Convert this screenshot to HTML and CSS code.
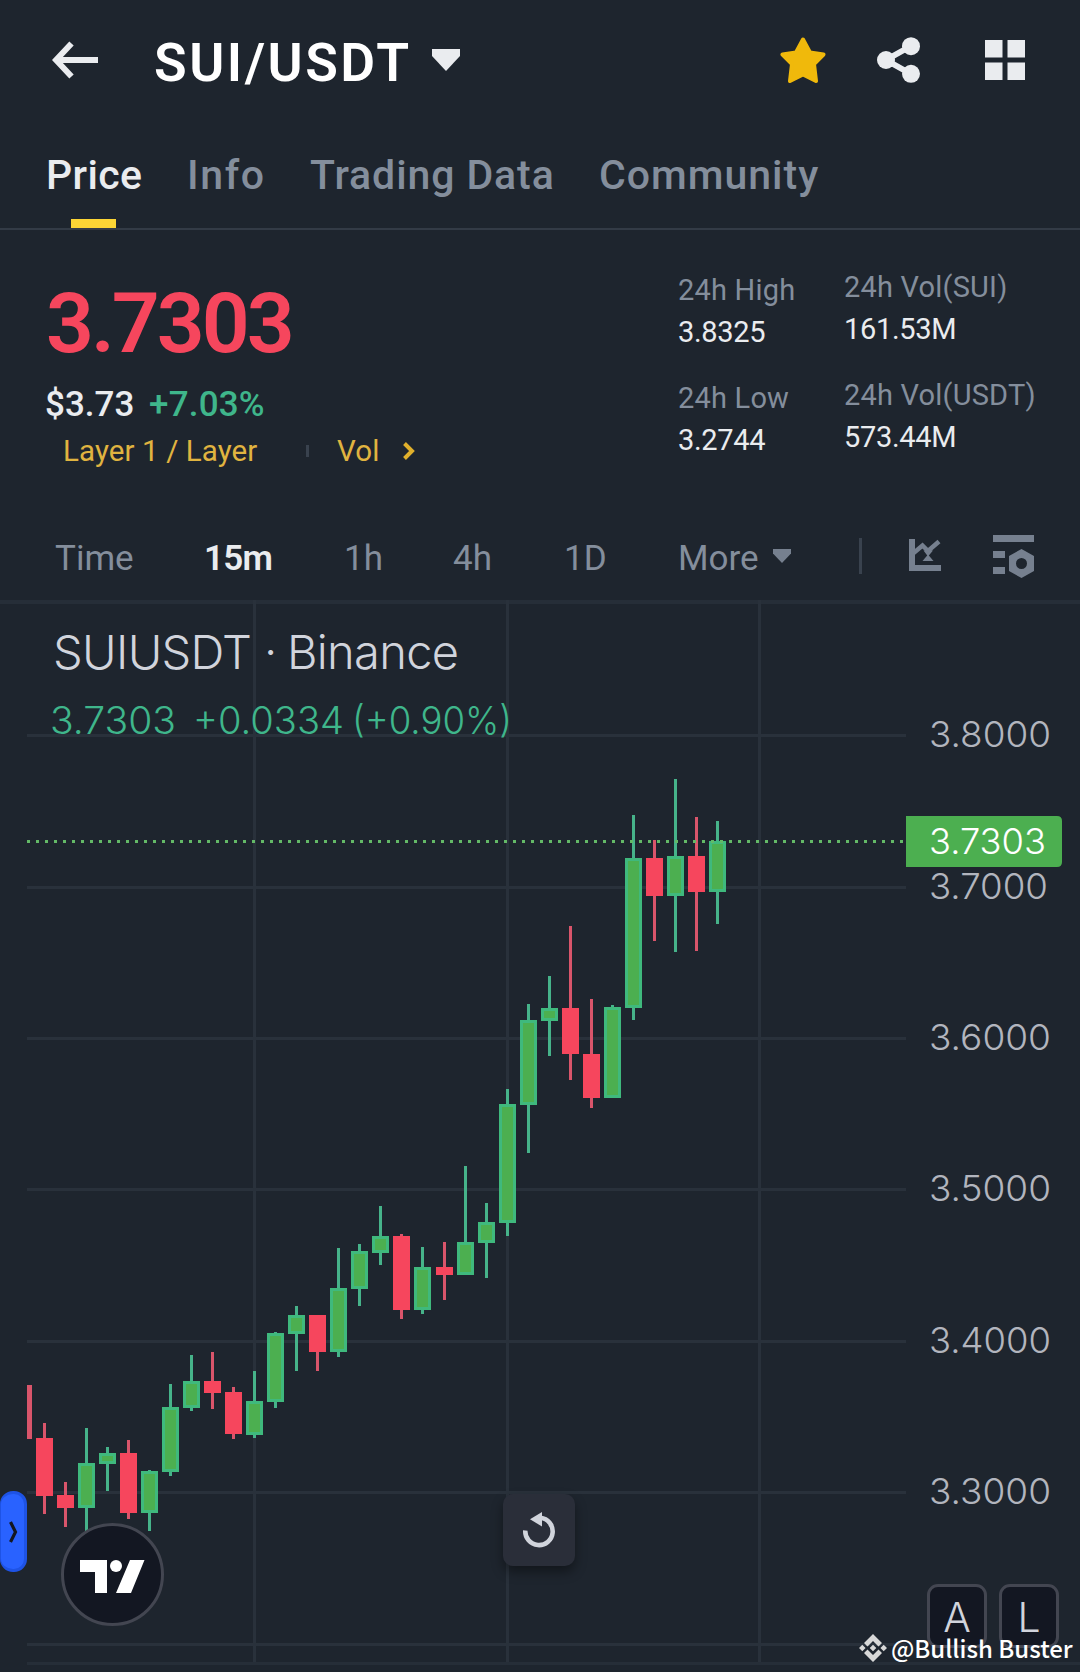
FILE: index.html
```html
<!DOCTYPE html>
<html lang="en">
<head>
  <meta charset="UTF-8">
  <title>SUI/USDT</title>
  <link rel="stylesheet" href="styles.css">
</head>
<body>
  <header class="topbar">
    <svg class="back" width="46" height="38" viewBox="0 0 46 38">
      <path d="M46 19H4M19.500 2.500L4 19L19.500 35.500" fill="none" stroke="#eaecef" stroke-width="6"/>
    </svg>
    <h1 class="pair">SUI/USDT</h1>
    <svg class="pair-caret" width="28" height="22" viewBox="0 0 28 22">
      <path d="M0 0H28V7L14 22L0 7Z" fill="#eaecef"/>
    </svg>
    <svg class="star" width="46" height="47" viewBox="0 0 46 47">
      <path d="M23 2.500L30 15.500L43.500 17.500L34 27L36 44L23 37.500L10 44L12 27L2.500 17.500L16 15.500Z" fill="#f0b90b" stroke="#f0b90b" stroke-width="4" stroke-linejoin="round"/>
    </svg>
    <svg class="share" width="43" height="46" viewBox="0 0 43 46">
      <path d="M34 9L9 23L34 37" fill="none" stroke="#eaecef" stroke-width="6"/>
      <circle cx="34" cy="9.200" r="9" fill="#eaecef"/>
      <circle cx="9" cy="23" r="9" fill="#eaecef"/>
      <circle cx="34" cy="36.800" r="9" fill="#eaecef"/>
    </svg>
    <svg class="grid-icon" width="40" height="40" viewBox="0 0 40 40">
      <path d="M0 0H17.500V17.500H0ZM22.500 0H40V17.500H22.500ZM0 22.500H17.500V40H0ZM22.500 22.500H40V40H22.500Z" fill="#eaecef"/>
    </svg>
  </header>

  <nav class="tabs">
    <a class="tab active">Price</a>
    <a class="tab info">Info</a>
    <a class="tab trading">Trading Data</a>
    <a class="tab community">Community</a>
  </nav>

  <section class="summary">
    <div class="quote">
      <div class="last-price">3.7303</div>
      <div class="change"><span class="usd">$3.73</span><span class="percent">+7.03%</span></div>
      <div class="tags">
        <span class="tag-layer">Layer 1 / Layer</span>
        <span class="tag-line"></span>
        <span class="tag-vol">Vol</span>
        <svg width="12" height="18" viewBox="0 0 12 18">
          <path d="M1.500 1.500L9 9L1.500 16.500" fill="none" stroke="#e0b02c" stroke-width="4"/>
        </svg>
      </div>
    </div>
    <div class="stats">
      <div class="stat"><span class="label">24h High</span><span class="value">3.8325</span></div>
      <div class="stat"><span class="label">24h Low</span><span class="value">3.2744</span></div>
    </div>
    <div class="stats stats-vol">
      <div class="stat"><span class="label">24h Vol(SUI)</span><span class="value">161.53M</span></div>
      <div class="stat"><span class="label">24h Vol(USDT)</span><span class="value">573.44M</span></div>
    </div>
  </section>

  <nav class="intervals">
    <span>Time</span>
    <span class="selected">15m</span>
    <span>1h</span>
    <span>4h</span>
    <span>1D</span>
    <span>More</span>
    <svg class="more-caret" width="18" height="14" viewBox="0 0 18 14">
      <path d="M0 0H18V4.500L9 14L0 4.500Z" fill="#76808f"/>
    </svg>
    <i class="divider"></i>
    <svg class="draw" width="33" height="33" viewBox="0 0 33 33">
      <path d="M0 0H6V26H32V32H0Z" fill="#76808f"/>
      <path d="M4 14.500L13.500 6.500L19 12L30 2.500" fill="none" stroke="#76808f" stroke-width="4.500"/>
      <path d="M19 15.500L13.500 22H24.500Z" fill="#76808f"/>
      <path d="M14.500 11.500L19 17.500L24 11.500Z" fill="#76808f"/>
    </svg>
    <svg class="settings" width="41" height="43" viewBox="0 0 41 43">
      <path d="M0 0H41V7H0ZM0 16H12V23H0ZM0 32H12V39H0Z" fill="#76808f"/>
      <path d="M28.500 14L41 21V36L28.500 43L16 36V21ZM28.500 23A5.500 5.500 0 1 0 28.500 34A5.500 5.500 0 1 0 28.500 23Z" fill="#76808f" fill-rule="evenodd"/>
    </svg>
  </nav>

  <main class="chart">
    <svg class="plot" width="1080" height="1072" viewBox="0 600 1080 1072">
      <rect class="border" x="0" y="600" width="1080" height="4"/>
      <g id="grid"></g>
      <rect class="border" x="27" y="1662" width="1053" height="3"/>
      <g id="candles"></g>
      <line class="last-line" x1="27" y1="841.500" x2="904" y2="841.500"/>
      <g class="legend">
        <text class="symbol" x="53" y="669" textLength="199">SUIUSDT</text>
        <text class="symbol" x="264" y="669">·</text>
        <text class="symbol" x="287" y="669" textLength="172">Binance</text>
        <text class="delta" x="50" y="733.500" textLength="126" lengthAdjust="spacingAndGlyphs">3.7303</text>
        <text class="delta" x="193" y="733.500" textLength="151" lengthAdjust="spacingAndGlyphs">+0.0334</text>
        <text class="delta" x="352" y="733.500" textLength="160" lengthAdjust="spacingAndGlyphs">(+0.90%)</text>
      </g>
      <g id="axis"></g>
      <path d="M906 816H1057Q1062 816 1062 821V862Q1062 867 1057 867H906Z" fill="#4caf50"/>
      <text class="price-tag" x="929" y="854" textLength="117" lengthAdjust="spacingAndGlyphs">3.7303</text>
    </svg>

    <button class="drawer">
      <svg width="9" height="22" viewBox="0 0 9 22"><path d="M1.500 1L6.500 11L1.500 21" fill="none" stroke="#131722" stroke-width="3.200"/></svg>
    </button>
    <div class="tv-logo">
      <svg width="65" height="33" viewBox="0 0 65 33">
        <path d="M0 0H27V33H15V12H0ZM50 0H64.500L51 33H36Z" fill="#fff"/>
        <circle cx="36" cy="6" r="6" fill="#fff"/>
      </svg>
    </div>
    <button class="reset">
      <svg width="36" height="40" viewBox="0 0 36 40">
        <path d="M4.300 20.500A13.700 13.700 0 1 0 19.500 7.800" fill="none" stroke="#d1d4dc" stroke-width="4.600"/>
        <path d="M9 9.300L21 2V16.500Z" fill="#d1d4dc"/>
      </svg>
    </button>
    <div class="scale-buttons">
      <button>A</button>
      <button>L</button>
    </div>
    <div class="author">
      <svg width="28" height="28" viewBox="0 0 28 28">
        <path d="M14 0L23 9L19.500 12.500L14 7L8.500 12.500L5 9ZM14 28L5 19L8.500 15.500L14 21L19.500 15.500L23 19ZM0 14L3.300 10.700L6.600 14L3.300 17.300ZM21.400 14L24.700 10.700L28 14L24.700 17.300ZM10.700 14L14 10.700L17.300 14L14 17.300Z" fill="#d8d8d8"/>
      </svg>
      <span>@Bullish Buster</span>
    </div>
  </main>

  <script>
    var NS = "http://www.w3.org/2000/svg";

    function add(parentId, tag, attrs, text) {
      var el = document.createElementNS(NS, tag);
      for (var key in attrs) {
        el.setAttribute(key, attrs[key]);
      }
      if (text) el.textContent = text;
      document.getElementById(parentId).appendChild(el);
    }

    // y position of every price line
    var levels = [
      ["3.8000", 735.5], ["3.7000", 887.5], ["3.6000", 1038.5],
      ["3.5000", 1189.5], ["3.4000", 1341.5], ["3.3000", 1492.5]
    ];

    [254.5, 507.5, 759.5].forEach(function (x) {
      add("grid", "line", { x1: x, x2: x, y1: 600, y2: 1663 });
    });
    levels.forEach(function (level) {
      add("grid", "line", { x1: 27, x2: 906, y1: level[1], y2: level[1] });
      add("axis", "text", {
        x: 929,
        y: level[1] + 11.5,
        textLength: level[0] === "3.7000" ? 119 : 122,
        lengthAdjust: "spacingAndGlyphs"
      }, level[0]);
    });
    add("grid", "line", { x1: 27, x2: 906, y1: 1644.5, y2: 1644.5 });

    // center x, direction, high, body top, body bottom, low
    var candles = [
      [44.5, "down", 1423, 1438, 1496, 1514],
      [65.5, "down", 1482, 1495, 1508, 1527],
      [86.5, "up", 1428, 1463, 1508, 1531],
      [107.5, "up", 1447, 1453, 1464, 1491],
      [128.5, "down", 1440, 1453, 1513, 1519],
      [149.5, "up", 1470, 1471, 1513, 1531],
      [170.5, "up", 1384, 1407, 1472, 1476],
      [191.5, "up", 1355, 1381, 1408, 1411],
      [212.5, "down", 1352, 1381, 1393, 1409],
      [233.5, "down", 1387, 1392, 1434, 1439],
      [254.5, "up", 1371, 1401, 1435, 1438],
      [275.5, "up", 1332, 1333, 1402, 1408],
      [296.5, "up", 1306, 1315, 1334, 1371],
      [317.5, "down", 1315, 1315, 1352, 1371],
      [338.5, "up", 1248, 1288, 1352, 1357],
      [359.5, "up", 1244, 1251, 1289, 1306],
      [380.5, "up", 1206, 1236, 1253, 1265],
      [401.5, "down", 1234, 1236, 1310, 1319],
      [422.5, "up", 1247, 1267, 1310, 1314],
      [444.5, "down", 1242, 1267, 1275, 1300],
      [465.5, "up", 1166, 1242, 1275, 1275],
      [486.5, "up", 1203, 1222, 1243, 1278],
      [507.5, "up", 1089, 1104, 1223, 1236],
      [528.5, "up", 1004, 1020, 1105, 1153],
      [549.5, "up", 976, 1008, 1021, 1056],
      [570.5, "down", 926, 1008, 1054, 1080],
      [591.5, "down", 999, 1054, 1098, 1108],
      [612.5, "up", 1005, 1007, 1098, 1098],
      [633.5, "up", 815, 858, 1008, 1020],
      [654.5, "down", 840, 858, 896, 941],
      [675.5, "up", 779, 856, 896, 952],
      [696.5, "down", 817, 856, 892, 951],
      [717.5, "up", 821, 841, 892, 924]
    ];

    // candle cut off by the left edge
    add("candles", "rect", { "class": "wick down", x: 27, y: 1385, width: 5, height: 54 });

    candles.forEach(function (c) {
      add("candles", "rect", { "class": "wick " + c[1], x: c[0] - 1.5, y: c[2], width: 3, height: c[5] - c[2] });
      add("candles", "rect", { "class": "body " + c[1], x: c[0] - 7, y: c[3] + 1.5, width: 14, height: c[4] - c[3] - 3 });
    });
  </script>
</body>
</html>
```
FILE: styles.css
```css
* {
  box-sizing: border-box;
}

body {
  margin: 0;
  width: 1080px;
  height: 1672px;
  overflow: hidden;
  background-color: #1e252e;
  color: #eaecef;
  font-family: Roboto, "Noto Sans", sans-serif;
}

svg {
  display: block;
}

button {
  padding: 0;
  border: none;
  font: inherit;
}

.topbar {
  display: flex;
  align-items: center;
  height: 120px;
  padding: 0 55px 0 52px;
}

.pair {
  width: 277px;
  margin: 5px 0 0 56px;
  font-size: 53.5px;
  font-weight: 600;
  line-height: 60px;
  letter-spacing: 2.5px;
  white-space: nowrap;
  color: #fff;
}

.pair-caret {
  margin-left: 1px;
}

.star {
  margin: 1px 0 0 320px;
}

.share {
  margin-left: 51px;
}

.grid-icon {
  margin-left: auto;
}

.tabs {
  display: grid;
  grid-template-columns: 141px 123px 289px auto;
  height: 110px;
  padding-left: 46px;
  border-bottom: 2px solid #333b46;
}

.tab {
  position: relative;
  justify-self: start;
  height: 108px;
  font-size: 41px;
  font-weight: 500;
  line-height: 110px;
  white-space: nowrap;
  color: #848e9c;
}

.tab.active {
  letter-spacing: 0.4px;
  color: #eaecef;
}

.tab.active::after {
  content: "";
  position: absolute;
  left: 25px;
  bottom: 0;
  width: 45px;
  height: 9px;
  background-color: #fcd535;
}

.info {
  letter-spacing: 1.6px;
}

.trading {
  letter-spacing: 0.9px;
}

.community {
  letter-spacing: 1px;
}

.summary {
  display: grid;
  grid-template-columns: 632px 166px 1fr;
  height: 287px;
  padding-left: 46px;
  white-space: nowrap;
}

.quote {
  padding-top: 44px;
}

.last-price {
  font-size: 84px;
  font-weight: 600;
  line-height: 100px;
  letter-spacing: -3px;
  color: #f6465d;
}

.change {
  display: flex;
  margin-top: 6px;
  font-size: 35px;
  font-weight: 500;
  line-height: 50px;
}

.usd {
  width: 104px;
  margin-left: -1px;
}

.percent {
  letter-spacing: 0.2px;
  color: #3fb68b;
}

.tags {
  display: flex;
  align-items: center;
  margin-top: -2px;
  padding-left: 17px;
  font-size: 29.5px;
  line-height: 46px;
  letter-spacing: 0.1px;
  color: #e0b440;
}

.tag-layer {
  width: 243px;
}

.tag-line {
  width: 3px;
  height: 12px;
  background-color: #39424e;
}

.tag-vol {
  width: 66px;
  margin-left: 28px;
}

.stats {
  display: flex;
  flex-direction: column;
  gap: 24px;
  padding-top: 39px;
  font-size: 29px;
  line-height: 42px;
}

.stats-vol {
  padding-top: 36px;
}

.stat {
  display: flex;
  flex-direction: column;
}

.label {
  letter-spacing: 0.2px;
  color: #848e9c;
}

.value {
  letter-spacing: -0.3px;
}

.intervals {
  display: grid;
  grid-template-columns: 149px 140px 109px 111px 114px 95px 86px 50px 84px 41px;
  align-items: center;
  height: 83px;
  padding-left: 55px;
  font-size: 35px;
  line-height: 83px;
  color: #848e9c;
}

.selected {
  font-weight: 600;
  letter-spacing: -0.8px;
  color: #eaecef;
}

.more-caret {
  margin-top: -6px;
}

.divider {
  width: 3px;
  height: 36px;
  margin-top: -6px;
  background-color: #39424e;
}

.draw {
  margin-top: -6px;
}

.settings {
  margin-top: -4px;
}

.chart {
  position: relative;
  height: 1072px;
  font-family: Inter, "Liberation Sans", sans-serif;
  font-weight: 300;
}

.border {
  fill: #262e38;
}

#grid line {
  stroke: #29313b;
  stroke-width: 3;
}

#axis text {
  font-size: 35px;
  fill: #b2b5be;
}

.price-tag {
  font-size: 35px;
  fill: #fff;
}

.symbol {
  font-size: 47px;
  fill: #d1d4dc;
}

.delta {
  font-size: 38px;
  fill: #3fb68b;
}

.wick.up {
  fill: #46b38a;
}

.wick.down {
  fill: #d9556b;
}

.body {
  stroke-width: 3;
}

.body.up {
  fill: #4caf50;
  stroke: #3fb97d;
}

.body.down {
  fill: #f6465d;
  stroke: #f6465d;
}

.last-line {
  stroke: #63b967;
  stroke-width: 3;
  stroke-dasharray: 3 6;
}

/* controls floating over the plot */
.drawer {
  position: absolute;
  left: 0;
  top: 891px;
  width: 27px;
  height: 81px;
  padding-left: 8px;
  border: 3px solid #1e53e5;
  border-left-width: 1px;
  border-radius: 13px;
  background-color: #2962ff;
}

.tv-logo {
  position: absolute;
  left: 61px;
  top: 923px;
  display: flex;
  align-items: center;
  justify-content: center;
  width: 103px;
  height: 103px;
  padding-top: 3px;
  border: 3px solid #434651;
  border-radius: 50%;
  background-color: #131722;
}

.reset {
  position: absolute;
  left: 503px;
  top: 894px;
  display: flex;
  align-items: center;
  justify-content: center;
  width: 72px;
  height: 72px;
  border-radius: 10px;
  background-color: #2a2e39;
  box-shadow: 0 6px 12px rgba(0, 0, 0, 0.4);
}

.scale-buttons {
  position: absolute;
  left: 927px;
  top: 984px;
  display: flex;
  gap: 12px;
}

.scale-buttons button {
  width: 60px;
  height: 64px;
  border: 3px solid #434651;
  border-radius: 11px;
  background-color: #131722;
  font-size: 41px;
  line-height: 60px;
  color: #d1d4dc;
}

.author {
  position: absolute;
  left: 859px;
  top: 1030px;
  display: flex;
  align-items: center;
  gap: 4px;
  font-family: "Noto Sans CJK SC", sans-serif;
  font-size: 24px;
  font-weight: 500;
  line-height: 36px;
  white-space: nowrap;
  color: #fff;
}
```
